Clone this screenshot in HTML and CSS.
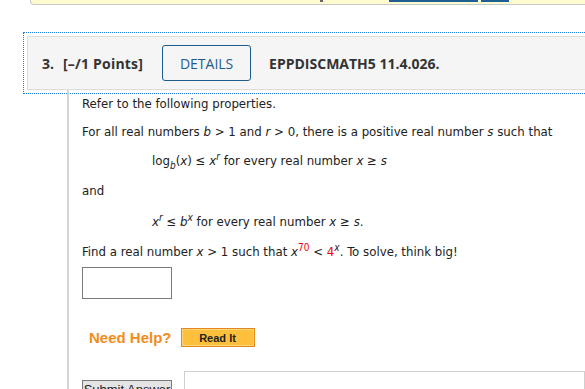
FILE: index.html
```html
<!DOCTYPE html>
<html>
<head>
<title>Question 3</title>
<link rel="stylesheet" href="styles.css">
</head>
<body>
  <div class="notice">
    <span class="notice-mark"></span>
    <span class="notice-btn wide"></span>
    <span class="notice-btn"></span>
  </div>

  <div class="question">
    <div class="question-head">
      <span class="qnum">3.</span>
      <span class="points">[&ndash;/1 Points]</span>
      <button class="details">DETAILS</button>
      <span class="qcode">EPPDISCMATH5 11.4.026.</span>
    </div>
  </div>

  <div class="question-body">
    <p class="intro">Refer to the following properties.</p>
    <p>For all real numbers <i>b</i> &gt; 1 and <i>r</i> &gt; 0, there is a positive real number <i>s</i> such that</p>
    <p class="formula">log<sub><i>b</i></sub>(<i>x</i>) &le; <i>x</i><sup><i>r</i></sup> for every real number <i>x</i> &ge; <i>s</i></p>
    <p class="joiner">and</p>
    <p class="formula"><i>x</i><sup><i>r</i></sup> &le; <i>b</i><sup><i>x</i></sup> for every real number <i>x</i> &ge; <i>s</i>.</p>
    <p class="task">Find a real number <i>x</i> &gt; 1 such that <i>x</i><sup class="red">70</sup> &lt; <span class="red">4</span><sup><i>x</i></sup>. To solve, think big!</p>
    <input type="text" class="answer">

    <div class="help">
      <span class="help-label">Need Help?</span>
      <button class="read-it">Read It</button>
    </div>

    <div class="submit-row">
      <button class="submit">Submit Answer</button>
      <div class="submit-note"></div>
    </div>
  </div>
</body>
</html>
```

FILE: styles.css
```css
html {
  overflow: hidden;
}
body {
  margin: 0;
  font-family: "DejaVu Sans Condensed", "DejaVu Sans", sans-serif;
  font-size: 13.1px;
  color: #222;
  background-color: #ffffff;
}

/* leftover of the banner above */
.notice {
  display: flex;
  align-items: flex-start;
  height: 4px;
  margin-left: 30px;
  padding-left: 289px;
  background-color: #fffbd1;
  border-bottom: 1px solid #c8c8c8;
  border-left: 1px solid #c8c8c8;
  border-bottom-left-radius: 4px;
}
.notice-mark {
  width: 3px;
  height: 2px;
  background-color: #666;
}
.notice-btn {
  width: 28px;
  height: 2px;
  margin-left: 3px;
  background-color: #1f5f94;
}
.notice-btn.wide {
  width: 89px;
  margin-left: 66px;
}

.question {
  margin: 27px -20px 0 23px;
  padding: 3px;
  border: 1px dotted #1a7fd8;
}
.question-head {
  display: flex;
  align-items: center;
  height: 52px;
  padding-left: 14px;
  background-color: #f5f5f5;
  border: 1px solid #dddddd;
  font-family: "Open Sans", sans-serif;
  font-size: 14px;
  color: #333;
}
.qnum {
  font-weight: 700;
  width: 21px;
}
.points {
  font-weight: 700;
  letter-spacing: 0.2px;
}
.details {
  width: 89px;
  height: 36px;
  margin-left: 19px;
  padding: 0;
  font-family: "Open Sans", sans-serif;
  font-size: 14px;
  color: #1d5c8c;
  background-color: transparent;
  border: 1px solid #1d5c8c;
  border-radius: 3px;
}
.qcode {
  margin-left: 18px;
  font-weight: 700;
}

.question-body {
  margin: -4px 0 0 67px;
  padding: 6px 0 0 13px;
  border-left: 2px solid #d4d4d4;
}
.question-body p {
  margin: 0 0 13px;
  line-height: 16px;
}
.question-body p.intro {
  margin-bottom: 12px;
}
.question-body p.formula {
  margin: 0 0 14px 70px;
}
.question-body p.joiner {
  margin-bottom: 15px;
}
.question-body p.task {
  margin-bottom: 7px;
}
sub, sup {
  font-size: 10px;
  line-height: 0;
}
.red {
  color: #e8000b;
}

.answer {
  display: block;
  width: 90px;
  height: 32px;
  margin: 0;
  box-sizing: border-box;
  border: 1px solid #7a7a7a;
}

.help {
  display: flex;
  align-items: center;
  gap: 9px;
  margin: 29px 0 0 7px;
}
.help-label {
  font-family: "Liberation Sans", Arial, sans-serif;
  font-size: 15px;
  font-weight: 700;
  color: #f28c1c;
}
.read-it {
  width: 74px;
  height: 19px;
  padding: 0;
  font-family: "Liberation Sans", Arial, sans-serif;
  font-size: 11px;
  font-weight: 700;
  color: #222;
  background-color: #fdbf3c;
  border: 1px solid #e2871c;
  box-shadow: inset 0 0 0 1px #ffd67c;
}

.submit-row {
  display: flex;
  align-items: flex-start;
  gap: 12px;
  margin-top: 24px;
}
.submit {
  width: 90px;
  height: 20px;
  margin-top: 9px;
  padding: 0;
  font-family: "Liberation Sans", Arial, sans-serif;
  font-size: 13px;
  line-height: 16px;
  color: #222;
  background-color: #e4e4e4;
  border: 1px solid #7a7a7a;
}
.submit-note {
  flex: 1;
  height: 60px;
  border: 1px solid #cfcfcf;
}
```
